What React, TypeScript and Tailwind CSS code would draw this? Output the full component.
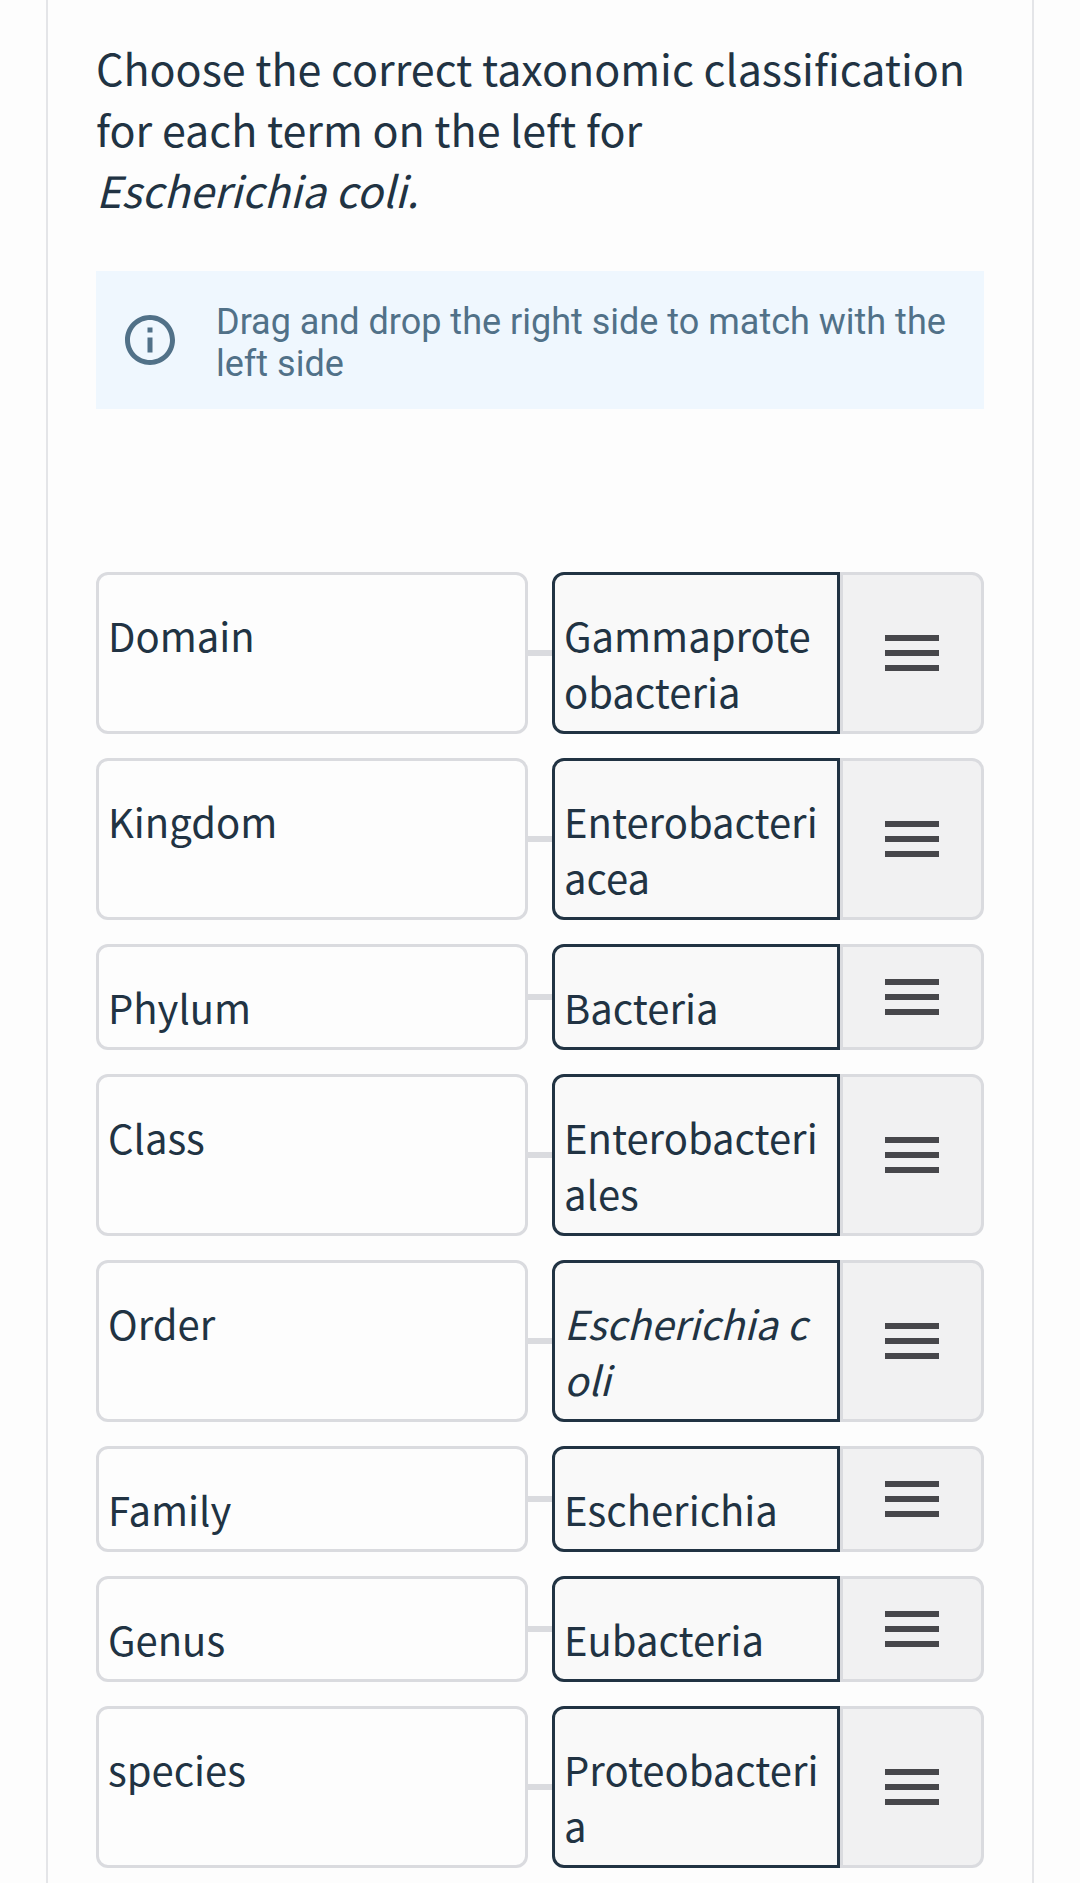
import React, { useState } from 'react';
import { MdInfoOutline } from 'react-icons/md';
import clsx from 'clsx';

interface Answer {
  text: string;
  italic?: boolean;
}

const TERMS = ['Domain', 'Kingdom', 'Phylum', 'Class', 'Order', 'Family', 'Genus', 'species'];

const INITIAL_ANSWERS: Answer[] = [
  { text: 'Gammaproteobacteria' },
  { text: 'Enterobacteriacea' },
  { text: 'Bacteria' },
  { text: 'Enterobacteriales' },
  { text: 'Escherichia coli', italic: true },
  { text: 'Escherichia' },
  { text: 'Eubacteria' },
  { text: 'Proteobacteria' },
];

interface MatchRowProps {
  term: string;
  answer: Answer;
  onDragStart: () => void;
  onDrop: () => void;
}

const MatchRow: React.FC<MatchRowProps> = ({ term, answer, onDragStart, onDrop }) => (
  <li className="grid grid-cols-[minmax(0,1fr)_24px_minmax(0,1fr)]">
    {/* Fixed term */}
    <div className="rounded-xl border-3 border-[#dadbdf] px-[9px] pt-8 pb-3">
      {term}
    </div>

    {/* Connector */}
    <div className="h-1.5 self-center bg-[#dadbdf]"></div>

    {/* Draggable answer */}
    <div
      className="flex items-stretch"
      draggable
      onDragStart={onDragStart}
      onDragOver={(e) => e.preventDefault()}
      onDrop={onDrop}
    >
      <div
        className={clsx(
          'w-2/3 rounded-l-xl border-3 border-[#213343] bg-[#f9f9f9] px-[9px] pt-8 pb-3 break-all',
          answer.italic && 'italic'
        )}
      >
        {answer.text}
      </div>
      <button
        type="button"
        aria-label={`Move ${answer.text}`}
        className="w-1/3 flex flex-col items-center justify-center gap-[9px] rounded-r-xl border-3 border-[#dadbdf] bg-[#f1f1f2] cursor-grab"
      >
        <span className="w-[54px] h-1.5 bg-[#47474b]"></span>
        <span className="w-[54px] h-1.5 bg-[#47474b]"></span>
        <span className="w-[54px] h-1.5 bg-[#47474b]"></span>
      </button>
    </div>
  </li>
);

export default function App() {
  const [answers, setAnswers] = useState(INITIAL_ANSWERS);
  const [dragIndex, setDragIndex] = useState<number | null>(null);

  const handleDrop = (index: number) => {
    if (dragIndex === null) return;
    const next = [...answers];
    [next[dragIndex], next[index]] = [next[index], next[dragIndex]];
    setAnswers(next);
    setDragIndex(null);
  };

  return (
    <div className="min-h-screen bg-[#fdfdfd] px-[46px] text-[#213343] font-['Noto_Sans_CJK_SC',sans-serif]">
      <main className="min-h-screen border-x-2 border-[#e4e5e8] px-12 pt-[37px] pb-[15px]">
        <h1 className="text-[43px] leading-[61px]">
          Choose the correct taxonomic classification for each term on the left for <br />
          <em>Escherichia coli.</em>
        </h1>

        {/* Hint */}
        <div className="mt-[51px] flex items-center gap-9 bg-[#eff7fe] p-6 text-[#517188]">
          <MdInfoOutline size={60} className="shrink-0" />
          <p className="pt-1.5 font-[Roboto,sans-serif] text-[36px] leading-[42px]">
            Drag and drop the right side to match with the left side
          </p>
        </div>

        <ul className="mt-[163px] flex flex-col gap-6 text-[40px] leading-[56px]">
          {TERMS.map((term, i) => (
            <MatchRow
              key={term}
              term={term}
              answer={answers[i]}
              onDragStart={() => setDragIndex(i)}
              onDrop={() => handleDrop(i)}
            />
          ))}
        </ul>
      </main>
    </div>
  );
}
